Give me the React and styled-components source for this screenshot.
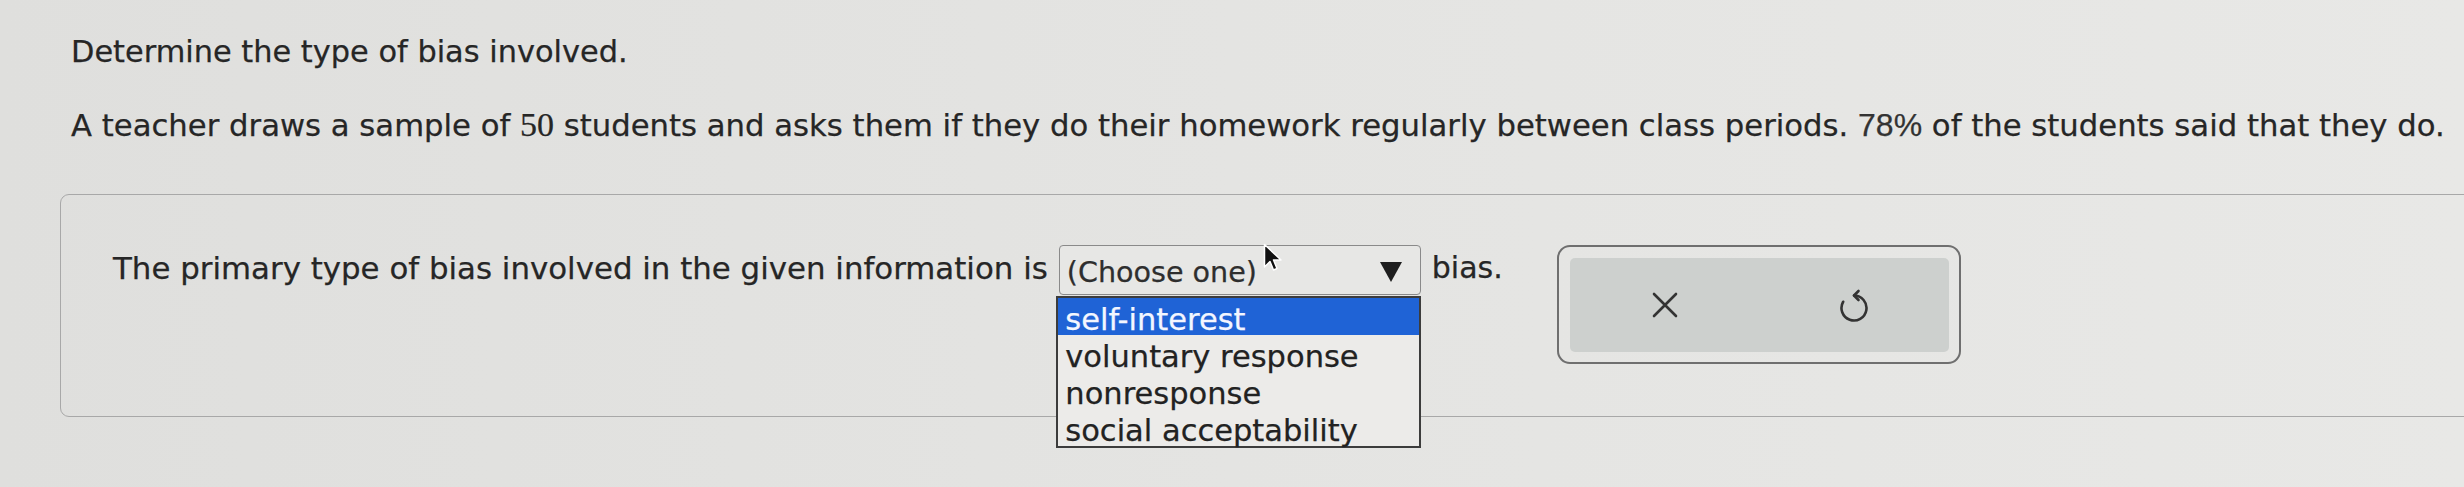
import React from "react";
import styled, { createGlobalStyle } from "styled-components";

const GlobalStyle = createGlobalStyle`
  html, body {
    margin: 0;
    padding: 0;
    overflow: hidden;
    background: #e3e3e1;
  }
  body {
    font-family: "DejaVu Sans", Verdana, sans-serif;
    color: #262626;
    -webkit-text-stroke: 0.25px currentColor;
  }
`;

const Page = styled.div`
  width: 2464px;
  height: 487px;
  box-sizing: border-box;
  padding: 34px 0 0 60px;
  background: linear-gradient(90deg, #dfdfdd 0%, #e4e4e2 50%, #e8e8e6 100%);
`;

const Line = styled.p`
  margin: ${(p) => p.$top || 0}px 0 0 0;
  padding-left: 11px;
  font-size: ${(p) => p.$size || 30}px;
  line-height: 36px;
  white-space: nowrap;
`;

const SerifNum = styled.span`
  font-family: "Liberation Serif", "Times New Roman", serif;
  font-size: 34px;
`;

const SansNum = styled.span`
  font-family: "Liberation Sans", Arial, sans-serif;
  font-size: 32px;
  color: #333;
`;

const Panel = styled.div`
  margin: 50px -20px 0 0;
  height: 223px;
  box-sizing: border-box;
  border: 1.5px solid #a8a8a8;
  border-radius: 9px;
  padding: 50px 0 0 52px;
`;

const Row = styled.div`
  display: flex;
  align-items: flex-start;
`;

const Words = styled.span`
  margin: 5px 0 0 ${(p) => p.$left || 0}px;
  font-size: ${(p) => p.$size || 30}px;
  line-height: 36px;
  white-space: nowrap;
`;

const Select = styled.div`
  position: relative;
  margin-left: 11px;
  width: 362px;
  height: 50px;
  box-sizing: border-box;
  border: 1.5px solid #8a8a8a;
  border-radius: 4px;
  background: #e7e7e5;
  display: flex;
  align-items: center;
  justify-content: space-between;
  padding: 3px 18px 0 7px;
  font-size: 28.6px;
  color: #2e2e2e;
`;

const List = styled.ul`
  position: absolute;
  top: 50px;
  left: -3.5px;
  width: 365px;
  box-sizing: border-box;
  margin: 0;
  padding: 0;
  list-style: none;
  border: 2px solid #3c3c3c;
  border-bottom-width: 2.5px;
  background: #ecebe9;
  z-index: 2;
`;

const Option = styled.li`
  height: 37px;
  box-sizing: border-box;
  padding: 3px 0 0 7px;
  line-height: 37px;
  font-size: 30.5px;
  white-space: nowrap;
  color: ${(p) => (p.$active ? "#f3f6ff" : "#222")};
  background: ${(p) => (p.$active ? "#1f63d6" : "transparent")};
`;

const Cursor = styled.svg`
  position: absolute;
  left: 203px;
  top: -3px;
  z-index: 3;
`;

const Tools = styled.div`
  margin: 0 0 0 54px;
  width: 404px;
  height: 119px;
  box-sizing: border-box;
  border: 2px solid #6f6f6f;
  border-radius: 13px;
  padding: 11px 10px 10px 11px;
  display: flex;
`;

const ToolBar = styled.div`
  flex: 1;
  display: flex;
  background: #cdd0ce;
  border-radius: 5px;
`;

const ToolButton = styled.button`
  flex: 1;
  border: none;
  background: transparent;
  padding: 0;
  display: flex;
  align-items: center;
  justify-content: center;
  cursor: pointer;
`;

const options = [
  "self-interest",
  "voluntary response",
  "nonresponse",
  "social acceptability",
];

export default function App() {
  return (
    <>
      <GlobalStyle />
      <Page>
        <Line $size={30.4}>Determine the type of bias involved.</Line>
        <Line $top={37} $size={30.7}>
          A teacher draws a sample of <SerifNum>50</SerifNum> students and asks
          them if they do their homework regularly between class periods.{" "}
          <SansNum>78%</SansNum> of the students said that they do.
        </Line>
        <Panel>
          <Row>
            <Words $size={30.85}>
              The primary type of bias involved in the given information is
            </Words>
            <Select>
              <span>(Choose one)</span>
              <svg width="22" height="20" viewBox="0 0 22 20">
                <path d="M0 0 H22 L11 20 Z" fill="#1e1e1e" />
              </svg>
              <Cursor width="20" height="30" viewBox="0 0 20 30">
                <path
                  d="M1.5 1.5 L1.5 24 L7 18.5 L10.5 27 L14 25.5 L10.5 17 L18 17 Z"
                  fill="#111"
                  stroke="#fff"
                  strokeWidth="1.5"
                  strokeLinejoin="round"
                />
              </Cursor>
              <List>
                {options.map((o, i) => (
                  <Option key={o} $active={i === 0}>
                    {o}
                  </Option>
                ))}
              </List>
            </Select>
            <Words $left={11}>bias.</Words>
            <Tools>
              <ToolBar>
                <ToolButton aria-label="Clear">
                  <svg width="26" height="26" viewBox="0 0 26 26">
                    <path
                      d="M2 2L24 24M24 2L2 24"
                      stroke="#333"
                      strokeWidth="2.6"
                      strokeLinecap="round"
                    />
                  </svg>
                </ToolButton>
                <ToolButton aria-label="Reset">
                  <svg width="32" height="34" viewBox="0 0 32 34">
                    <path
                      d="M5.17 13.75 A12.5 12.5 0 1 0 16 7.5"
                      fill="none"
                      stroke="#333"
                      strokeWidth="2.6"
                      strokeLinecap="round"
                    />
                    <path
                      d="M20.5 3 L16 7.5 L20.5 12"
                      fill="none"
                      stroke="#333"
                      strokeWidth="2.6"
                      strokeLinecap="round"
                      strokeLinejoin="round"
                    />
                  </svg>
                </ToolButton>
              </ToolBar>
            </Tools>
          </Row>
        </Panel>
      </Page>
    </>
  );
}
